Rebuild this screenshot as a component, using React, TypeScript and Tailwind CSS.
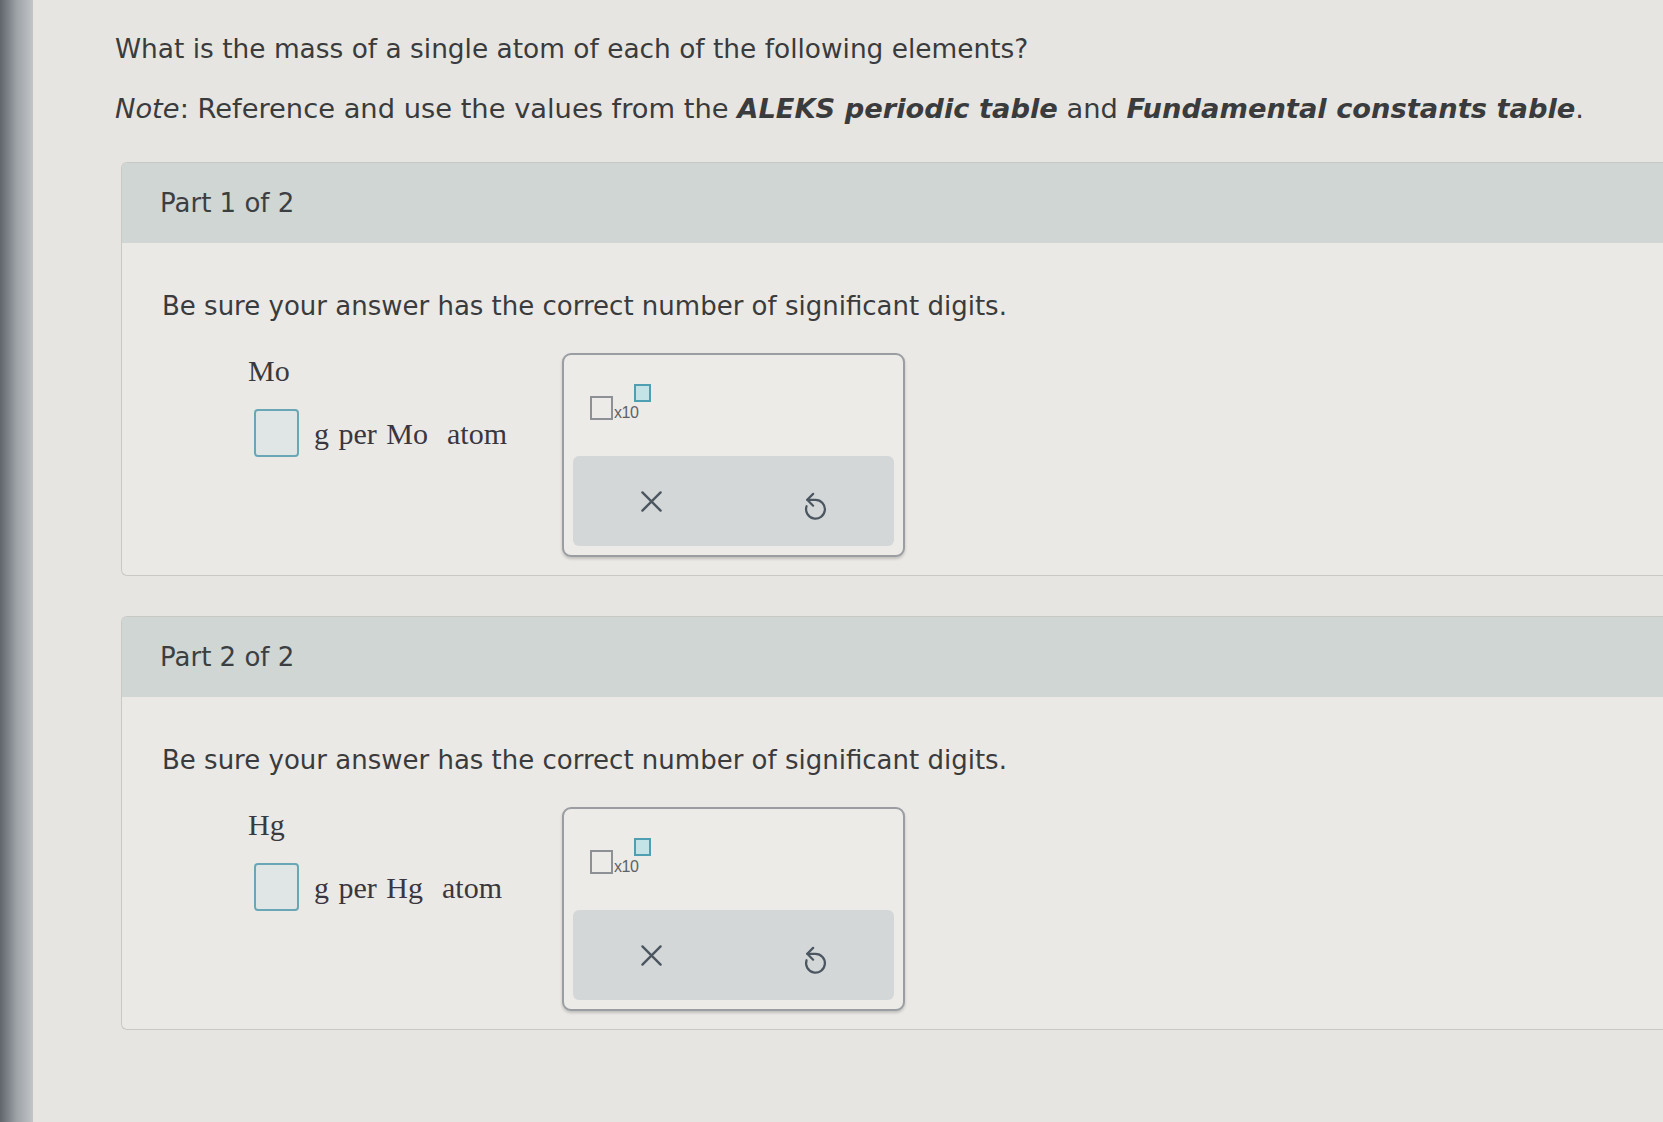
import React from 'react';

const sans = { fontFamily: '"DejaVu Sans", Verdana, sans-serif' };
const serif = { fontFamily: '"Liberation Serif", "Times New Roman", serif' };

function UndoIcon() {
  return (
    <svg width="25" height="33" viewBox="0 0 20 28" fill="none" stroke="#4b5661" strokeWidth="1.9" strokeLinecap="round" strokeLinejoin="round">
      <path d="M8 5 L3 10 L8 15" />
      <path d="M3 10 H10 A8 8 0 1 1 2.4 15.5" />
    </svg>
  );
}

function CloseIcon() {
  return (
    <svg width="25" height="25" viewBox="0 0 22 22" fill="none" stroke="#4b5661" strokeWidth="2.1" strokeLinecap="round">
      <path d="M3 3 L19 19 M19 3 L3 19" />
    </svg>
  );
}

function Toolbox() {
  return (
    <div className="w-[343px] h-[204px] shrink-0 rounded-[9px] border-2 border-[#9a9ea2] bg-[#ecebe8] shadow-[0_2px_3px_rgba(0,0,0,0.18)] flex flex-col">
      <div className="h-[101px] pl-[26px] pt-[29px]">
        <div className="flex items-end">
          <div className="w-[23px] h-[24px] border-2 border-[#8d9196] mt-[12px]" />
          <span className="text-[16px] text-[#5d6267] leading-none ml-[1px] mb-[-1px] tracking-[-0.5px]" style={{ fontFamily: '"Liberation Sans", Arial, sans-serif' }}>x10</span>
          <div className="w-[17px] h-[18px] border-2 border-[#4e9fb2] bg-[#c4e3e6] self-start ml-[-4px]" />
        </div>
      </div>
      <div className="mx-[9px] mb-[9px] flex-1 rounded-[6px] bg-[#d4d7d7] flex items-center">
        <div className="flex-1 flex justify-center pr-[4px]">
          <CloseIcon />
        </div>
        <div className="flex-1 flex justify-center pl-[4px] pt-[6px]">
          <UndoIcon />
        </div>
      </div>
    </div>
  );
}

function Part({ label, symbol }: { label: string; symbol: string }) {
  return (
    <section className="rounded-l-[6px] border border-r-0 border-[#c8c8c4] bg-[#ebe9e6] overflow-hidden">
      <div className="h-[80px] bg-[#cfd6d4] flex items-center pl-[38px] text-[26px] text-[#3c3f42]" style={sans}>
        {label}
      </div>
      <div className="pl-[40px] pt-[46px] pb-[18px]">
        <p className="text-[26px] leading-[34px] text-[#3a3b3d]" style={sans}>
          Be sure your answer has the correct number of significant digits.
        </p>
        <div className="flex mt-[30px]">
          <div className="ml-[86px] w-[314px] shrink-0" style={serif}>
            <div className="text-[30px] leading-[36px] text-[#3a3a3c]">{symbol}</div>
            <div className="flex items-center mt-[20px] ml-[6px]">
              <div className="w-[45px] h-[48px] shrink-0 rounded-[4px] border-2 border-[#6aa7b6] bg-[#dfe6e5]" />
              <span className="ml-[15px] whitespace-nowrap text-[30px] text-[#3a3640] [word-spacing:2px]">
                g per {symbol}&nbsp; atom
              </span>
            </div>
          </div>
          <Toolbox />
        </div>
      </div>
    </section>
  );
}

export default function App() {
  return (
    <div className="min-h-screen w-full flex bg-[#e7e5e1]">
      <div className="w-[33px] shrink-0 bg-gradient-to-r from-[#5f656b] via-[#9da2a7] to-[#c2c5c7]" />
      <div className="flex-1 pt-[32px] pl-[82px]">
        <p className="text-[26.4px] leading-[34px] text-[#3a3b3d]" style={sans}>
          What is the mass of a single atom of each of the following elements?
        </p>
        <p className="mt-[26px] text-[27.3px] leading-[34px] text-[#3a3b3d]" style={sans}>
          <i>Note</i>: Reference and use the values from the <b><i>ALEKS periodic table</i></b> and{' '}
          <b><i>Fundamental constants table</i></b>.
        </p>
        <div className="mt-[36px] ml-[6px] flex flex-col gap-[40px]">
          <Part label="Part 1 of 2" symbol="Mo" />
          <Part label="Part 2 of 2" symbol="Hg" />
        </div>
      </div>
    </div>
  );
}
